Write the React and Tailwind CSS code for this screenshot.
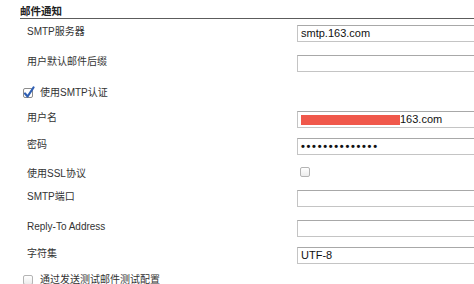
const font = { fontFamily: '"Liberation Sans", "Noto Sans CJK SC", sans-serif' };

function CheckBox({ checked }) {
  if (checked) {
    return (
      <span className="relative block h-[10px] w-[10px] shrink-0 rounded-[2px] border border-[#8c8c8c] bg-white">
        <svg className="absolute -left-[1px] -top-[3px]" width="12" height="13" viewBox="0 0 12 13">
          <path d="M2 7.5 L4.6 10.5 L10.5 1.5" fill="none" stroke="#2f5fb3" strokeWidth="2.2" strokeLinecap="round" strokeLinejoin="round" />
        </svg>
      </span>
    );
  }
  return <span className="block h-[10px] w-[10px] shrink-0 rounded-[2px] border border-[#b4b4b4] bg-gradient-to-b from-white to-[#ececec]" />;
}

function Field({ children, className = '' }) {
  return (
    <div
      className={`flex h-[17px] w-[220px] shrink-0 items-center border border-[#c4c4c4] border-t-[#a8a8a8] bg-white px-[3px] text-[11px] text-[#111] ${className}`}
    >
      {children}
    </div>
  );
}

function Row({ label, children, className = 'h-[17px]' }) {
  return (
    <div className={`flex items-start ${className}`}>
      <div className="w-[277px] shrink-0 pl-[7px] pt-[1px] text-[10px] leading-[12px] text-[#333]">{label}</div>
      {children}
    </div>
  );
}

function CheckRow({ label, checked, className = '' }) {
  return (
    <div className={`flex h-[10px] items-center pl-[3px] ${className}`}>
      <CheckBox checked={checked} />
      <span className="ml-[7px] whitespace-nowrap text-[10px] leading-[12px] text-[#333]">{label}</span>
    </div>
  );
}

export default function App() {
  return (
    <div className="h-[284px] w-[474px] overflow-hidden bg-white pl-[20px]" style={font}>
      <div className="h-[19px] border-b border-[#5c5c5c] pt-[6px] text-[10.5px] font-bold leading-[11px] text-[#222]">
        邮件通知
      </div>

      <Row label="SMTP服务器" className="mt-[6px] h-[17px]">
        <Field>smtp.163.com</Field>
      </Row>
      <Row label="用户默认邮件后缀" className="mt-[13px] h-[17px]">
        <Field />
      </Row>

      <CheckRow label="使用SMTP认证" checked className="mt-[16px]" />

      <Row label="用户名" className="mt-[13px] h-[17px]">
        <Field>
          <span className="inline-block h-[10px] w-[99px] shrink-0 bg-[#f0584b]" />
          <span>163.com</span>
        </Field>
      </Row>
      <Row label="密码" className="mt-[10px] h-[17px]">
        <Field>
          <span className="text-[11px] font-bold tracking-[1.7px]">••••••••••••••</span>
        </Field>
      </Row>
      <Row label="使用SSL协议" className="mt-[12px] h-[10px]">
        <div className="pl-[3px]">
          <CheckBox />
        </div>
      </Row>
      <Row label="SMTP端口" className="mt-[13px] h-[17px]">
        <Field />
      </Row>
      <Row label="Reply-To Address" className="mt-[13px] h-[17px]">
        <Field />
      </Row>
      <Row label="字符集" className="mt-[10px] h-[17px]">
        <Field className="text-[10.5px]">UTF-8</Field>
      </Row>

      <CheckRow label="通过发送测试邮件测试配置" className="mt-[11px]" />
    </div>
  );
}
